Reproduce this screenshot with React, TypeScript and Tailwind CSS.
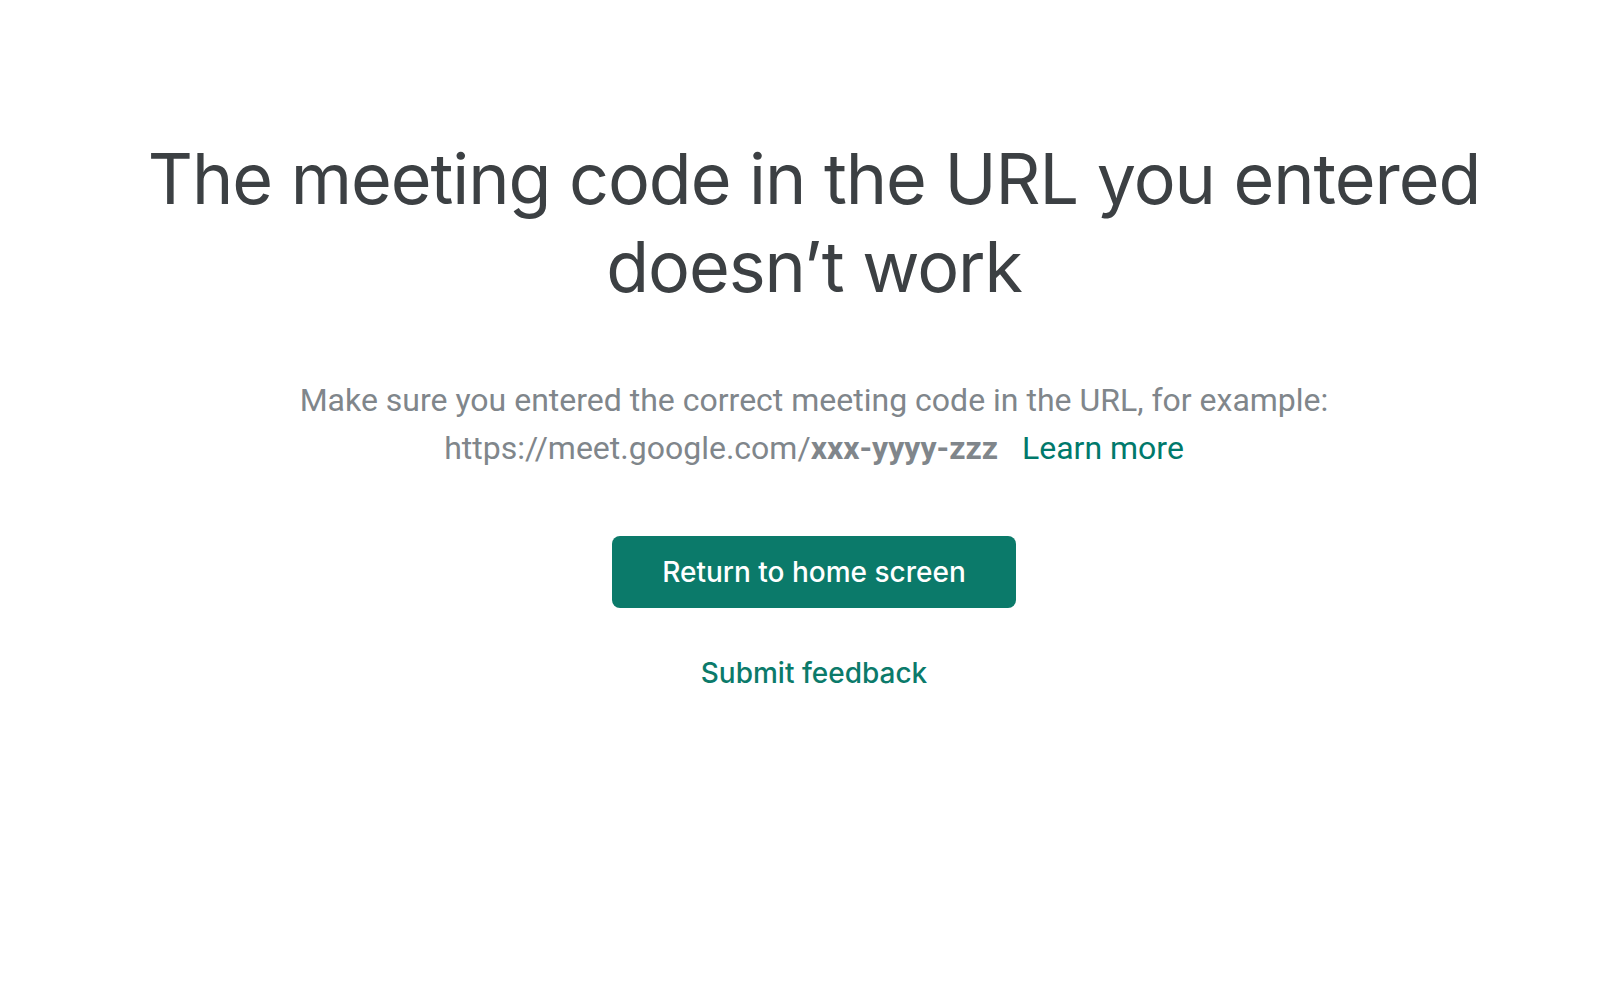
import React from "react";

export default function App() {
  return (
    <div className="min-h-screen w-full bg-white flex flex-col items-center pl-[24px]">
      <div className="flex flex-col items-center pt-[135px] font-['Inter','Open_Sans',sans-serif]">
        <h1 className="text-center text-[#3c4043] text-[70px] leading-[88px] font-normal tracking-[-1.05px]">
          The meeting code in the URL you entered
          <br />
          doesn’t work
        </h1>
        <p className="mt-[65px] text-center text-[#80868b] text-[32px] leading-[48px] font-['Roboto','Liberation_Sans',sans-serif]">
          Make sure you entered the correct meeting code in the URL, for example:
          <br />
          https://meet.google.com/<span className="font-bold">xxx-yyyy-zzz</span>
          <a className="ml-[24px] text-[#00796b]" href="#">
            Learn more
          </a>
        </p>
        <button className="mt-[64px] w-[404px] h-[72px] rounded-[8px] bg-[#0b7a6a] text-white text-[28px] font-medium">
          Return to home screen
        </button>
        <button className="mt-[44px] text-[#0b7a6a] text-[28px] font-medium">
          Submit feedback
        </button>
      </div>
    </div>
  );
}
